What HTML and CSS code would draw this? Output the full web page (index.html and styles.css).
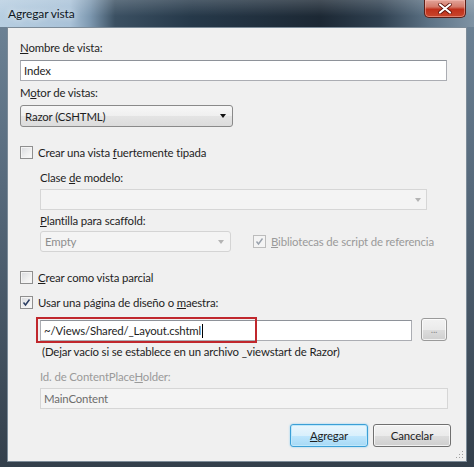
FILE: index.html
```html
<!DOCTYPE html>
<html lang="es">
<head>
  <meta charset="UTF-8">
  <title>Agregar vista</title>
  <link rel="stylesheet" href="styles.css">
</head>
<body>
  <div class="window">
    <div class="titlebar">
      <span class="title">Agregar vista</span>
      <div class="close-btn">
        <svg width="14" height="11" viewBox="0 0 14 11">
          <path d="M2 1.5 L12 9.5 M12 1.5 L2 9.5" stroke="#5a0f08" stroke-width="3.6" stroke-linecap="round"/>
          <path d="M2 1.5 L12 9.5 M12 1.5 L2 9.5" stroke="#ffffff" stroke-width="2.2" stroke-linecap="round"/>
        </svg>
      </div>
    </div>

    <div class="client">
      <div class="label"><u>N</u>ombre de vista:</div>
      <div class="textbox wide gap-5">Index</div>

      <div class="label gap-4">M<u>o</u>tor de vistas:</div>
      <div class="combo engine gap-5">
        <span>Razor (CSHTML)</span>
        <span class="arrow"></span>
      </div>

      <div class="check-row gap-18">
        <span class="check"></span>
        <span>Crear una vista <u>f</u>uertemente tipada</span>
      </div>

      <div class="indent">
        <div class="label gap-10">Clase <u>d</u>e modelo:</div>
        <div class="textbox disabled model gap-4">
          <span></span>
          <span class="arrow light"></span>
        </div>

        <div class="label gap-3"><u>P</u>lantilla para scaffold:</div>
        <div class="scaffold-row gap-3">
          <div class="combo disabled template">
            <span>Empty</span>
            <span class="arrow light"></span>
          </div>
          <div class="check-row muted">
            <span class="check checked disabled">
              <svg width="11" height="11" viewBox="0 0 11 11"><path d="M2.5 5.5 L4.5 8 L8.5 2.5" fill="none" stroke="#9aa2ad" stroke-width="1.4"/></svg>
            </span>
            <span><u>B</u>ibliotecas de script de referencia</span>
          </div>
        </div>
      </div>

      <div class="check-row gap-18">
        <span class="check"></span>
        <span><u>C</u>rear como vista parcial</span>
      </div>

      <div class="check-row gap-10">
        <span class="check checked">
          <svg width="11" height="11" viewBox="0 0 11 11"><path d="M2.5 5.5 L4.5 8 L8.5 2.5" fill="none" stroke="#2b3e63" stroke-width="1.5"/></svg>
        </span>
        <span>Usar una página de diseño o <u>m</u>aestra:</span>
      </div>

      <div class="indent">
        <div class="layout-row gap-8">
          <div class="textbox layout-path">~/Views/Shared/_Layout.cshtml<span class="caret"></span></div>
          <div class="button browse">...</div>
          <div class="highlight"></div>
        </div>
        <div class="hint gap-3">(Dejar vacío si se establece en un archivo _viewstart de Razor)</div>

        <div class="label muted gap-10">Id. de ContentPlace<u>H</u>older:</div>
        <div class="textbox disabled placeholder-id gap-4">MainContent</div>
      </div>

      <div class="actions">
        <div class="button default"><u>A</u>gregar</div>
        <div class="button">Cancelar</div>
      </div>
      <div class="grip"></div>
    </div>
  </div>
</body>
</html>
```

FILE: styles.css
```css
/* Window frame */
body {
  margin: 0;
  background: #ffffff;
  font-family: 'Lato', 'Open Sans', sans-serif;
  font-size: 11.4px;
  letter-spacing: -0.15px;
  color: #1e1e1e;
}

.window {
  width: 474px;
  height: 467px;
  display: flex;
  flex-direction: column;
  background: linear-gradient(to bottom, #6f8598 0, #56697b 40%, #333f4b 100%);
  box-sizing: border-box;
  padding: 0 7px 5px 7px;
  position: relative;
}

.titlebar {
  height: 27px;
  margin: 0 -7px;
  display: flex;
  align-items: flex-start;
  background:
    linear-gradient(to bottom, rgba(255, 255, 255, 0.18), rgba(0, 0, 0, 0) 60%),
    linear-gradient(to right, #b7cee1 0, #a9c2d8 70px, #7d98b0 90px, #3b5062 115px, #26394a 190px, #1c2834 320px, #2f4050 380px, #5d7386 430px, #7f93a4 474px);
}

.title {
  margin: 6px 0 0 8px;
  line-height: 16px;
  font-size: 12px;
  color: #10181f;
  text-shadow: 0 0 6px rgba(255, 255, 255, 0.9);
}

.close-btn {
  margin-left: auto;
  margin-right: 8px;
  width: 42px;
  height: 18px;
  box-sizing: border-box;
  border: 1px solid #5b1e17;
  border-top: none;
  border-radius: 0 0 5px 5px;
  background: linear-gradient(to bottom, #e2a499 0, #d47a6a 40%, #c0301b 55%, #c8462c 100%);
  box-shadow: inset 0 0 0 1px rgba(255, 200, 190, 0.45);
  display: flex;
  align-items: center;
  justify-content: center;
}

/* Client area */
.client {
  flex: 1;
  background: #f0f0f0;
  border: 1px solid #7c8b98;
  padding: 12px 15px 0 12px;
  display: flex;
  flex-direction: column;
  align-items: flex-start;
  position: relative;
}

.label,
.hint {
  line-height: 15px;
  height: 15px;
  white-space: nowrap;
}

.muted {
  color: #9a9a9a;
}

.indent {
  padding-left: 20px;
  display: flex;
  flex-direction: column;
  align-items: flex-start;
  align-self: stretch;
}

.gap-3 { margin-top: 3px; }
.gap-4 { margin-top: 4px; }
.gap-5 { margin-top: 5px; }
.gap-8 { margin-top: 8px; }
.gap-10 { margin-top: 10px; }
.gap-18 { margin-top: 18px; }

/* Text boxes */
.textbox {
  height: 21px;
  box-sizing: border-box;
  background: #ffffff;
  border: 1px solid #abadb3;
  border-top-color: #8e9299;
  padding: 0 3px;
  line-height: 19px;
  white-space: nowrap;
  display: flex;
  align-items: center;
}

.textbox.wide {
  width: 427px;
}

.textbox.disabled {
  background: #f4f4f4;
  border-color: #d6d6d6;
  color: #6d6d6d;
}

.textbox.model {
  width: 387px;
  justify-content: space-between;
  padding-right: 5px;
}

.textbox.placeholder-id {
  width: 408px;
}

.textbox.layout-path {
  width: 372px;
}

.caret {
  display: inline-block;
  width: 1px;
  height: 14px;
  background: #000000;
  margin-left: 1px;
}

/* Combo boxes */
.combo {
  height: 22px;
  box-sizing: border-box;
  border: 1px solid #8a8a8a;
  border-radius: 3px;
  background: linear-gradient(to bottom, #f7f7f7 0, #efefef 50%, #e4e4e4 51%, #dcdcdc 100%);
  padding: 0 6px 0 4px;
  display: flex;
  align-items: center;
  justify-content: space-between;
}

.combo.engine {
  width: 213px;
}

.combo.disabled {
  background: #f4f4f4;
  border-color: #d4d4d4;
  color: #8e8e8e;
  height: 21px;
}

.combo.template {
  width: 191px;
}

.arrow {
  width: 0;
  height: 0;
  border-left: 3.5px solid transparent;
  border-right: 3.5px solid transparent;
  border-top: 4px solid #111111;
}

.arrow.light {
  border-top-color: #b4b4b4;
}

.scaffold-row {
  display: flex;
  align-items: center;
  gap: 22px;
}

/* Check boxes */
.check-row {
  display: flex;
  align-items: center;
  gap: 5px;
  height: 15px;
  white-space: nowrap;
}

.check {
  width: 13px;
  height: 13px;
  box-sizing: border-box;
  border: 1px solid #8f8f8f;
  background: linear-gradient(135deg, #d8dade 0, #f0f0f0 60%, #fbfbfb 100%);
  box-shadow: inset 0 0 0 1px #f4f4f4;
  display: flex;
  align-items: center;
  justify-content: center;
}

.check.disabled {
  border-color: #bcbcbc;
  background: #f4f4f4;
}

/* Layout path row */
.layout-row {
  display: flex;
  align-items: flex-end;
  gap: 9px;
  position: relative;
}

.highlight {
  position: absolute;
  left: -4px;
  top: -1px;
  width: 221px;
  height: 26px;
  box-sizing: border-box;
  border: 2px solid #c0272d;
}

.hint {
  padding-left: 2px;
}

/* Buttons */
.button {
  height: 23px;
  box-sizing: border-box;
  border: 1px solid #707070;
  border-radius: 3px;
  background: linear-gradient(to bottom, #f2f2f2 0, #ebebeb 50%, #dddddd 51%, #cfcfcf 100%);
  box-shadow: inset 0 0 0 1px rgba(255, 255, 255, 0.7);
  display: flex;
  align-items: center;
  justify-content: center;
  line-height: 15px;
}

.button.browse {
  width: 26px;
  color: #8a8a8a;
  font-size: 10px;
  border-color: #9a9a9a;
}

.actions {
  align-self: stretch;
  display: flex;
  justify-content: flex-end;
  gap: 5px;
  margin-top: 15px;
}

.actions .button {
  width: 78px;
}

.button.default {
  border-color: #3c9fd6;
  background: linear-gradient(to bottom, #eaf6fd 0, #d9f0fc 50%, #bee6fd 51%, #a7d9f5 100%);
  box-shadow: inset 0 0 0 1px #bfe8fb, 0 0 2px #7ec8ef;
}

.grip {
  position: absolute;
  right: 3px;
  bottom: 3px;
  width: 8px;
  height: 8px;
  background-image: radial-gradient(circle, #a0a0a0 0.8px, transparent 1px);
  background-size: 3px 3px;
  clip-path: polygon(100% 0, 100% 100%, 0 100%);
}
```
